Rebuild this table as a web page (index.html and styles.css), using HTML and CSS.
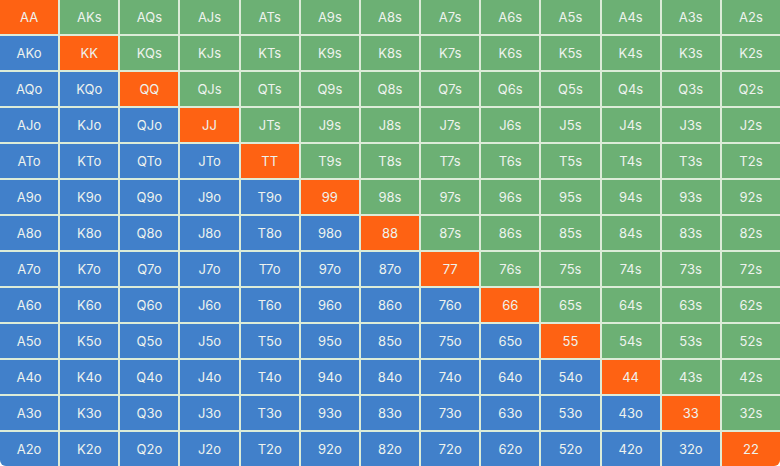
FILE: index.html
```
<!DOCTYPE html>
<html>
<head>
<meta charset="utf-8">
<link rel="stylesheet" href="styles.css">
</head>
<body>
<div class="grid">
<div class="c p">AA</div><div class="c s">AKs</div><div class="c s">AQs</div><div class="c s">AJs</div><div class="c s">ATs</div><div class="c s">A9s</div><div class="c s">A8s</div><div class="c s">A7s</div><div class="c s">A6s</div><div class="c s">A5s</div><div class="c s">A4s</div><div class="c s">A3s</div><div class="c s">A2s</div>
<div class="c o">AKo</div><div class="c p">KK</div><div class="c s">KQs</div><div class="c s">KJs</div><div class="c s">KTs</div><div class="c s">K9s</div><div class="c s">K8s</div><div class="c s">K7s</div><div class="c s">K6s</div><div class="c s">K5s</div><div class="c s">K4s</div><div class="c s">K3s</div><div class="c s">K2s</div>
<div class="c o">AQo</div><div class="c o">KQo</div><div class="c p">QQ</div><div class="c s">QJs</div><div class="c s">QTs</div><div class="c s">Q9s</div><div class="c s">Q8s</div><div class="c s">Q7s</div><div class="c s">Q6s</div><div class="c s">Q5s</div><div class="c s">Q4s</div><div class="c s">Q3s</div><div class="c s">Q2s</div>
<div class="c o">AJo</div><div class="c o">KJo</div><div class="c o">QJo</div><div class="c p">JJ</div><div class="c s">JTs</div><div class="c s">J9s</div><div class="c s">J8s</div><div class="c s">J7s</div><div class="c s">J6s</div><div class="c s">J5s</div><div class="c s">J4s</div><div class="c s">J3s</div><div class="c s">J2s</div>
<div class="c o">ATo</div><div class="c o">KTo</div><div class="c o">QTo</div><div class="c o">JTo</div><div class="c p">TT</div><div class="c s">T9s</div><div class="c s">T8s</div><div class="c s">T7s</div><div class="c s">T6s</div><div class="c s">T5s</div><div class="c s">T4s</div><div class="c s">T3s</div><div class="c s">T2s</div>
<div class="c o">A9o</div><div class="c o">K9o</div><div class="c o">Q9o</div><div class="c o">J9o</div><div class="c o">T9o</div><div class="c p">99</div><div class="c s">98s</div><div class="c s">97s</div><div class="c s">96s</div><div class="c s">95s</div><div class="c s">94s</div><div class="c s">93s</div><div class="c s">92s</div>
<div class="c o">A8o</div><div class="c o">K8o</div><div class="c o">Q8o</div><div class="c o">J8o</div><div class="c o">T8o</div><div class="c o">98o</div><div class="c p">88</div><div class="c s">87s</div><div class="c s">86s</div><div class="c s">85s</div><div class="c s">84s</div><div class="c s">83s</div><div class="c s">82s</div>
<div class="c o">A7o</div><div class="c o">K7o</div><div class="c o">Q7o</div><div class="c o">J7o</div><div class="c o">T7o</div><div class="c o">97o</div><div class="c o">87o</div><div class="c p">77</div><div class="c s">76s</div><div class="c s">75s</div><div class="c s">74s</div><div class="c s">73s</div><div class="c s">72s</div>
<div class="c o">A6o</div><div class="c o">K6o</div><div class="c o">Q6o</div><div class="c o">J6o</div><div class="c o">T6o</div><div class="c o">96o</div><div class="c o">86o</div><div class="c o">76o</div><div class="c p">66</div><div class="c s">65s</div><div class="c s">64s</div><div class="c s">63s</div><div class="c s">62s</div>
<div class="c o">A5o</div><div class="c o">K5o</div><div class="c o">Q5o</div><div class="c o">J5o</div><div class="c o">T5o</div><div class="c o">95o</div><div class="c o">85o</div><div class="c o">75o</div><div class="c o">65o</div><div class="c p">55</div><div class="c s">54s</div><div class="c s">53s</div><div class="c s">52s</div>
<div class="c o">A4o</div><div class="c o">K4o</div><div class="c o">Q4o</div><div class="c o">J4o</div><div class="c o">T4o</div><div class="c o">94o</div><div class="c o">84o</div><div class="c o">74o</div><div class="c o">64o</div><div class="c o">54o</div><div class="c p">44</div><div class="c s">43s</div><div class="c s">42s</div>
<div class="c o">A3o</div><div class="c o">K3o</div><div class="c o">Q3o</div><div class="c o">J3o</div><div class="c o">T3o</div><div class="c o">93o</div><div class="c o">83o</div><div class="c o">73o</div><div class="c o">63o</div><div class="c o">53o</div><div class="c o">43o</div><div class="c p">33</div><div class="c s">32s</div>
<div class="c o">A2o</div><div class="c o">K2o</div><div class="c o">Q2o</div><div class="c o">J2o</div><div class="c o">T2o</div><div class="c o">92o</div><div class="c o">82o</div><div class="c o">72o</div><div class="c o">62o</div><div class="c o">52o</div><div class="c o">42o</div><div class="c o">32o</div><div class="c p">22</div>
</div>
</body>
</html>
```
FILE: styles.css
```
html, body {
  margin: 0;
  padding: 0;
  background: #ffffff;
}
.grid {
  width: 780px;
  height: 466px;
  display: grid;
  grid-template-columns: repeat(13, 1fr);
  grid-template-rows: repeat(13, 1fr);
  gap: 2px;
  background: #dcecd8;
  border-radius: 0 0 6px 6px;
  overflow: hidden;
  font-family: Inter, "Noto Sans", sans-serif;
  font-size: 13px;
  color: #eef3ee;
}
.c {
  display: flex;
  align-items: center;
  justify-content: center;
}
.p { background: #fe6213; }
.s { background: #6cb074; }
.o { background: #4180ca; }
```
